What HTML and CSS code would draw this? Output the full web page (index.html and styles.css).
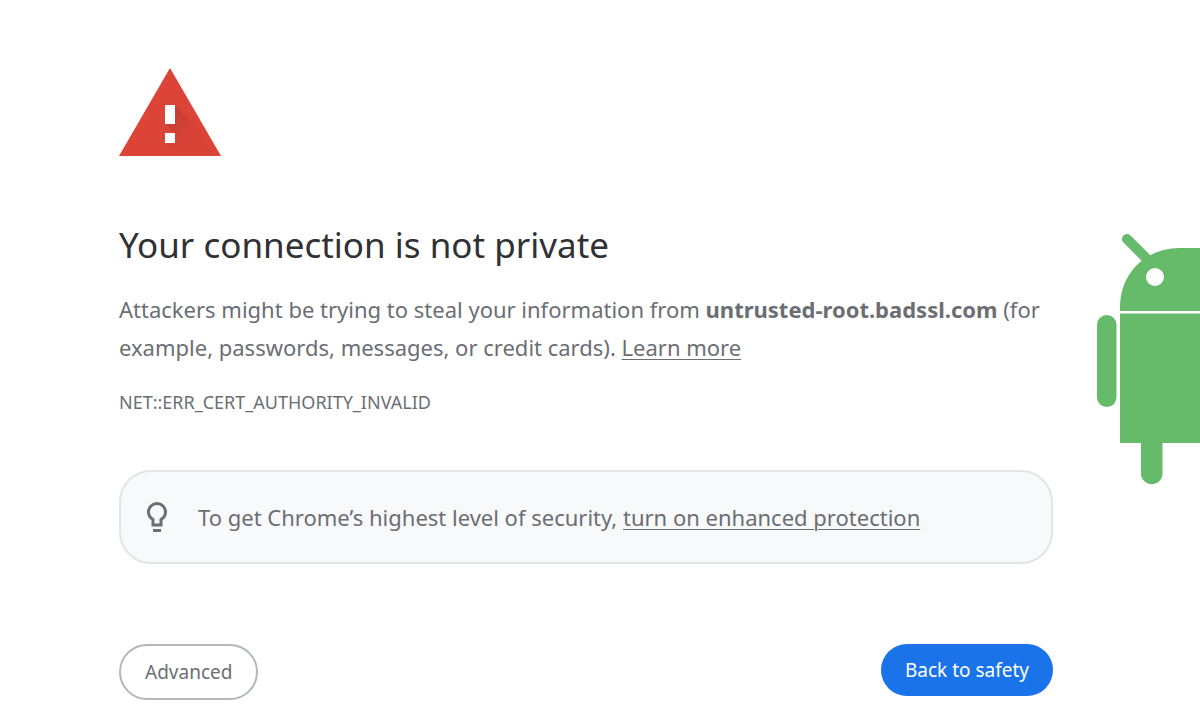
FILE: index.html
```html
<!DOCTYPE html>
<html lang="en">
<head>
    <meta charset="UTF-8">
    <meta name="viewport" content="width=device-width, initial-scale=1.0">
    <title>Privacy error</title>
    <link rel="stylesheet" href="styles.css">
</head>
<body>
    <div class="page">
        <main class="warning">
            <svg class="warning-icon" viewBox="0 0 102 88" aria-hidden="true">
                <defs>
                    <linearGradient id="shade" gradientUnits="userSpaceOnUse" x1="50" y1="50" x2="68" y2="68">
                        <stop offset="0" stop-color="#c23c30" stop-opacity="0.8"/>
                        <stop offset="1" stop-color="#c23c30" stop-opacity="0.15"/>
                    </linearGradient>
                </defs>
                <path fill="#db4437" d="M51 0l51 88H0z"/>
                <path fill="url(#shade)" d="M56 37l20 20 18 31H59L46 75l10-9-10-10z"/>
                <path fill="#fff" d="M46 37h10v19H46zM46 65h10v10H46z"/>
            </svg>

            <h1>Your connection is not private</h1>
            <p class="message">Attackers might be trying to steal your information from <strong>untrusted-root.badssl.com</strong> (for example, passwords, messages, or credit cards). <a href="#">Learn more</a></p>
            <p class="error-code">NET::ERR_CERT_AUTHORITY_INVALID</p>

            <div class="tip">
                <svg class="bulb" viewBox="0 0 20 30" fill="none" stroke="#6b6e72" aria-hidden="true">
                    <path stroke-width="3" d="M6 23v-5.500C3.500 16 1.500 13.500 1.500 10a8.500 8.500 0 0 1 17 0c0 3.500-2 6-4.500 7.500V23z"/>
                    <path stroke-width="3" d="M6 28.500h8"/>
                </svg>
                <p>To get Chrome’s highest level of security, <a href="#">turn on enhanced protection</a></p>
            </div>

            <div class="buttons">
                <button type="button" class="advanced">Advanced</button>
                <button type="button" class="back">Back to safety</button>
            </div>
        </main>

        <svg class="robot" viewBox="0 0 103 252" fill="#66bb6a" aria-hidden="true">
            <path stroke="#66bb6a" stroke-width="10" stroke-linecap="round" d="M30 6l24 24"/>
            <path d="M23 78v-4c0-34 26-59 60-59h20v63z"/>
            <circle cx="58" cy="44" r="9" fill="#fff"/>
            <path d="M23 80.500h80V210H23z"/>
            <rect x="0" y="82" width="19.500" height="92" rx="9.750"/>
            <path d="M44 209v31.500a10.500 10.500 0 0 0 21.500 0V209z"/>
        </svg>
    </div>
</body>
</html>
```
FILE: styles.css
```css
body {
    margin: 0;
    background-color: #fff;
    color: #6b6e73;
    font-family: "Noto Sans", "Open Sans", sans-serif;
    font-size: 22px;
}

.page {
    display: flex;
    align-items: flex-start;
    gap: 44px;
    padding: 68px 0 20px 119px;
}

.warning {
    flex: 1;
}

.warning-icon {
    display: block;
    width: 102px;
    height: 88px;
}

h1 {
    margin: 64px 0 20px;
    color: #303135;
    font-size: 35px;
    font-weight: 400;
    line-height: 50px;
}

p {
    margin: 0;
}

a {
    color: inherit;
    text-decoration-thickness: 1px;
    text-underline-offset: 3px;
}

.message {
    line-height: 38px;
}

.error-code {
    margin-top: 22px;
    font-size: 18px;
    line-height: 28px;
}

.tip {
    display: flex;
    align-items: center;
    gap: 31px;
    margin-top: 54px;
    padding: 28px 26px;
    border: 2px solid #e3e4e6;
    border-radius: 32px;
    background-color: #f8f9fb;
    line-height: 34px;
}

.bulb {
    width: 20px;
    height: 30px;
}

.buttons {
    display: flex;
    justify-content: space-between;
    align-items: flex-start;
    margin-top: 80px;
}

button {
    padding: 12px 24px;
    border: none;
    border-radius: 28px;
    font-family: inherit;
    font-size: 19px;
    line-height: 28px;
    cursor: pointer;
}

.advanced {
    border: 2px solid #b3b8bd;
    background-color: #fff;
    color: #6b6e73;
}

.back {
    background-color: #1a73e8;
    color: #fff;
}

.robot {
    width: 103px;
    height: 252px;
    margin-top: 165px;
}
```
